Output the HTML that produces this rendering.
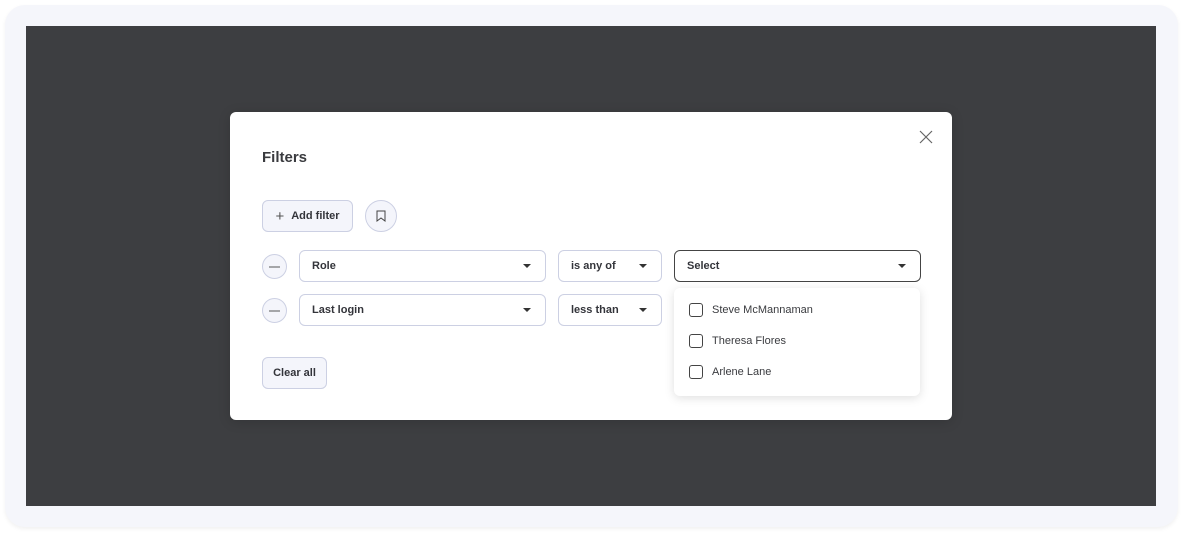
<!DOCTYPE html>
<html><head><style>
*{box-sizing:border-box;margin:0;padding:0}
body{width:1202px;height:551px;background:#fff;font-family:"Liberation Sans",sans-serif;position:relative;overflow:hidden}
.frame{position:absolute;left:5px;top:5px;width:1173px;height:522px;background:#f5f6fb;border-radius:20px;box-shadow:0 2px 4px rgba(0,0,0,.06)}
.dark{position:absolute;left:26px;top:26px;width:1130px;height:480px;background:#3d3e41}
.modal{position:absolute;left:230px;top:112px;width:722px;height:308px;background:#fff;border-radius:6px;box-shadow:0 2px 12px rgba(0,0,0,.15)}
.a{position:absolute}
.title{left:262px;top:149px;font-size:15px;font-weight:bold;color:#3a3b3f}
.btn{background:#f4f5fb;border:1px solid #ccd0e3;border-radius:6px;font-size:11px;font-weight:bold;color:#33343a;display:flex;align-items:center;justify-content:center}
.circ{border:1px solid #ccd0e3;border-radius:50%;background:#f4f5fb;display:flex;align-items:center;justify-content:center}
.sel{border:1px solid #ccd0e3;border-radius:6px;background:#fff;font-size:11px;font-weight:bold;color:#33343a;display:flex;align-items:center;padding-left:12px}
.sel:after{content:"";position:absolute;right:14px;top:13px;border-left:4px solid transparent;border-right:4px solid transparent;border-top:4px solid #333}
.dd{left:674px;top:288px;width:246px;height:108px;background:#fff;border-radius:6px;box-shadow:0 2px 10px rgba(0,0,0,.13)}
.item{position:absolute;left:15px;font-size:11px;color:#3a3b3f;display:flex;align-items:center}
.item i{display:inline-block;width:14px;height:14px;border:1.3px solid #444;border-radius:3px;margin-right:9px}
</style></head><body>
<div class="frame"></div>
<div class="dark"></div>
<div class="modal"></div>
<svg class="a" style="left:919px;top:130px" width="14" height="14"><path d="M1 1L13 13M13 1L1 13" stroke="#666" stroke-width="1.2"/></svg>
<div class="a title">Filters</div>
<div class="a btn" style="left:262px;top:200px;width:91px;height:32px"><span style="font-weight:normal;font-size:15px;margin-right:7px;color:#555">+</span>Add filter</div>
<div class="a circ" style="left:365px;top:200px;width:32px;height:32px"><svg width="10" height="12"><path d="M1 1H9V11L5 8L1 11Z" fill="none" stroke="#444" stroke-width="1"/></svg></div>
<div class="a circ" style="left:262px;top:254px;width:25px;height:25px"><svg width="11" height="2"><path d="M0 1H11" stroke="#444" stroke-width="0.9"/></svg></div>
<div class="a circ" style="left:262px;top:298px;width:25px;height:25px"><svg width="11" height="2"><path d="M0 1H11" stroke="#444" stroke-width="0.9"/></svg></div>
<div class="a sel" style="left:299px;top:250px;width:247px;height:32px">Role</div>
<div class="a sel" style="left:558px;top:250px;width:104px;height:32px">is any of</div>
<div class="a sel" style="left:674px;top:250px;width:247px;height:32px;border-color:#444">Select</div>
<div class="a sel" style="left:299px;top:294px;width:247px;height:32px">Last login</div>
<div class="a sel" style="left:558px;top:294px;width:104px;height:32px">less than</div>
<div class="a btn" style="left:262px;top:357px;width:65px;height:32px">Clear all</div>
<div class="a dd">
<div class="item" style="top:15px"><i></i>Steve McMannaman</div>
<div class="item" style="top:46px"><i></i>Theresa Flores</div>
<div class="item" style="top:77px"><i></i>Arlene Lane</div>
</div>
</body></html>
